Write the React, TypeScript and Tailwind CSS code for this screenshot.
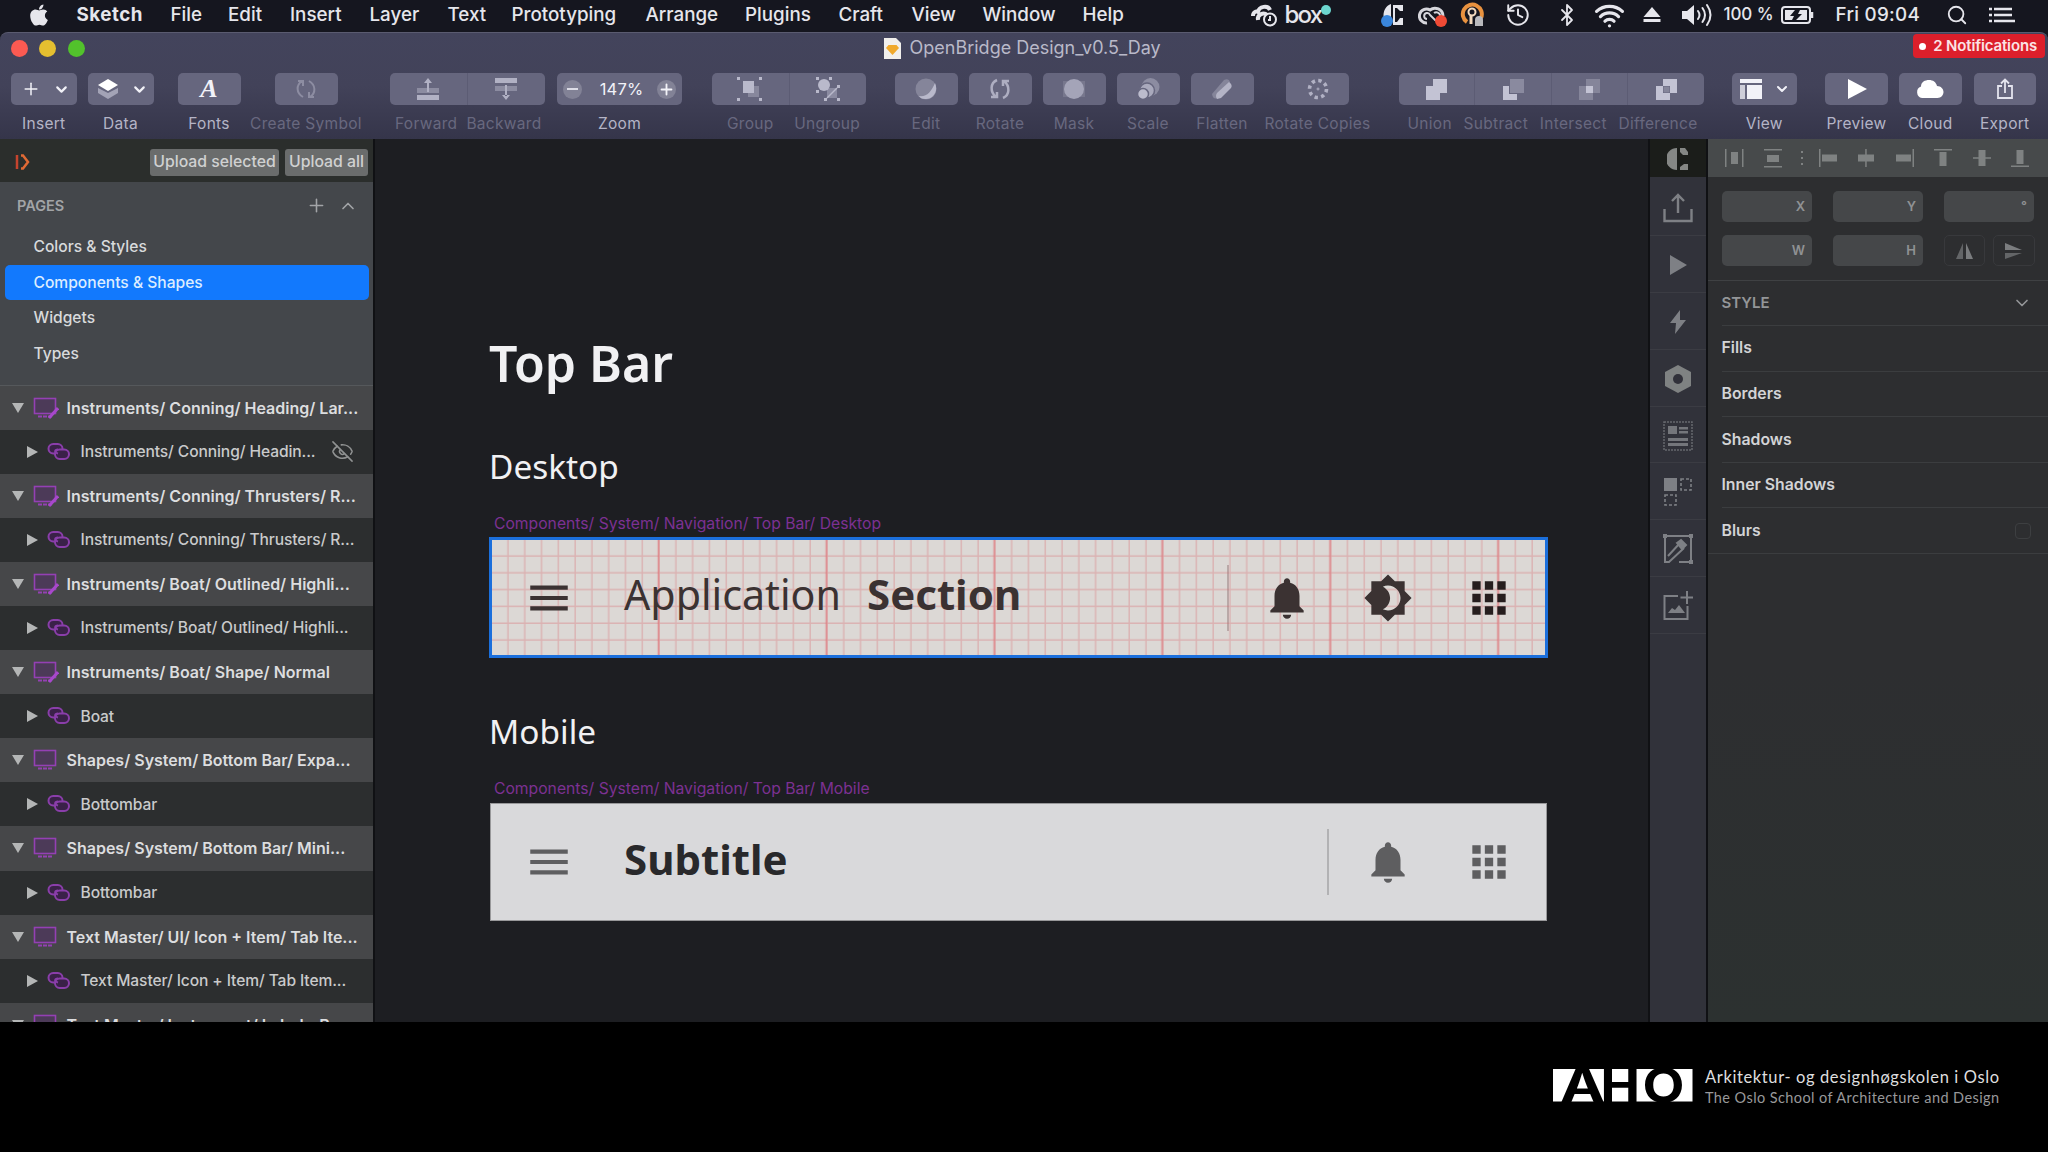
import React from 'react';
import { FaApple } from 'react-icons/fa';
import { MdMenu, MdNotifications, MdBrightness4, MdApps } from 'react-icons/md';
import { Bluetooth, ChevronDown, ChevronUp, EyeOff, History, Plus, Search, Wifi } from 'lucide-react';

const MENUS = [
  { label: 'File', width: 'w-[57.5px]' },
  { label: 'Edit', width: 'w-[62px]' },
  { label: 'Insert', width: 'w-[79.5px]' },
  { label: 'Layer', width: 'w-[78px]' },
  { label: 'Text', width: 'w-[64px]' },
  { label: 'Prototyping', width: 'w-[134px]' },
  { label: 'Arrange', width: 'w-[99.5px]' },
  { label: 'Plugins', width: 'w-[93.5px]' },
  { label: 'Craft', width: 'w-[73px]' },
  { label: 'View', width: 'w-[71px]' },
  { label: 'Window', width: 'w-[100px]' },
  { label: 'Help', width: 'w-[161px]' },
];

const PAGES = ['Colors & Styles', 'Components & Shapes', 'Widgets', 'Types'];

const LAYERS = [
  { name: 'Instruments/ Conning/ Heading/ Lar...', child: 'Instruments/ Conning/ Headin...', pen: true, hidden: true },
  { name: 'Instruments/ Conning/ Thrusters/ R...', child: 'Instruments/ Conning/ Thrusters/ R...', pen: true },
  { name: 'Instruments/ Boat/ Outlined/ Highli...', child: 'Instruments/ Boat/ Outlined/ Highli...', pen: true },
  { name: 'Instruments/ Boat/ Shape/ Normal', child: 'Boat', pen: true },
  { name: 'Shapes/ System/ Bottom Bar/ Expa...', child: 'Bottombar' },
  { name: 'Shapes/ System/ Bottom Bar/ Mini...', child: 'Bottombar' },
  { name: 'Text Master/ UI/ Icon + Item/ Tab Ite...', child: 'Text Master/ Icon + Item/ Tab Item...' },
  { name: 'Text Master/ Instrument/ Label - R...' },
];

const MenuBar = () => (
  <header className="flex h-8 items-center overflow-hidden whitespace-nowrap bg-[#15161f] pb-0.5 text-[18.8px] font-medium text-[#e6e6ec]">
    <div className="w-[76.500px] pl-[27px]"><FaApple size={24} /></div>
    <div className="w-[94px] font-bold tracking-[0.500px]">Sketch</div>
    {MENUS.map((m) => (
      <div key={m.label} className={m.width}>{m.label}</div>
    ))}
    <div className="flex w-[41px] justify-center">
      <svg width="27" height="24" viewBox="0 0 27 24" fill="none" stroke="#e6e6ec" strokeWidth="3">
        <path d="M2 13c0-4 3-5 5-4 1-6 10-7 12-2" strokeWidth="4" />
        <path d="M7 17c-1-6 6-8 9-5" strokeWidth="4" />
        <circle cx="19" cy="16.500" r="6" fill="#15161f" strokeWidth="2" />
        <path d="M19 13v4h-2" strokeWidth="2" />
      </svg>
    </div>
    <div className="flex w-[86px] items-start text-[24px] tracking-[-1.800px]">
      <span className="leading-7">box</span>
      <span className="mt-1 size-2.5 rounded-full bg-[#6cd6cf]" />
    </div>
    <div className="flex w-[42px] justify-center">
      <svg width="24" height="24" viewBox="0 0 24 24">
        <path d="M11 1v22C1 21 1 4 11 1z" fill="#e6e6ec" />
        <path d="M13 2h10v6h-3l-3-3h-2v14h2l3-4h3v7H13z" fill="#e6e6ec" />
        <circle cx="7" cy="18" r="6" fill="#3a86dc" />
      </svg>
    </div>
    <div className="flex w-10 justify-center">
      <svg width="30" height="24" viewBox="0 0 30 24" fill="none">
        <path d="M9 20a7 7 0 1 1 3-13 8 8 0 0 1 13 6" stroke="#d6d6dc" strokeWidth="3" />
        <path d="M9 16a3 3 0 1 1 3-4l5 5a4 4 0 1 0-1-7" stroke="#d6d6dc" strokeWidth="2" />
        <circle cx="23" cy="18" r="6" fill="#ef4a35" />
      </svg>
    </div>
    <div className="flex w-10 justify-center">
      <svg width="26" height="26" viewBox="0 0 26 26" fill="none">
        <path d="M7 20A9.500 9.500 0 1 1 21 16" stroke="#e9923f" strokeWidth="4" />
        <circle cx="12" cy="10" r="3.500" stroke="#f3d9bd" strokeWidth="2" />
        <path d="M11 13v9" stroke="#f3d9bd" strokeWidth="3" />
        <path d="M15 24v-6a4 4 0 0 1 8 0v6z" fill="#b9b9bd" />
      </svg>
    </div>
    <div className="flex w-[50px] justify-center"><History size={26} strokeWidth={1.8} /></div>
    <div className="flex w-12 justify-center"><Bluetooth size={24} strokeWidth={1.8} /></div>
    <div className="flex w-[38px] justify-center"><Wifi size={31} strokeWidth={2.5} /></div>
    <div className="flex w-[47px] justify-center">
      <svg width="18" height="16" viewBox="0 0 18 16" fill="#e6e6ec"><path d="M9 0l8.500 10H.5z" /><path d="M.5 12h17v3H.5z" /></svg>
    </div>
    <div className="flex w-12 pl-[5px]">
      <svg width="31" height="24" viewBox="0 0 31 24" fill="none" stroke="#e6e6ec" strokeWidth="2" strokeLinecap="round">
        <path d="M1 8h5l7-6v20l-7-6H1z" fill="#e6e6ec" stroke="none" />
        <path d="M17 8q3 4 0 8M21.500 5q5 7 0 14M26 2q7 10 0 20" />
      </svg>
    </div>
    <div className="w-[57px] text-[17px] tracking-[-0.1px]">100 %</div>
    <div className="w-[55px]">
      <svg width="33" height="18" viewBox="0 0 33 18" fill="none">
        <rect x="1" y="1" width="28" height="16" rx="3" stroke="#e6e6ec" strokeWidth="2" />
        <path d="M4 4h10l-5 6h4l-2 4H4zM26 14H15l6-6h-4l2-4h7z" fill="#e6e6ec" />
        <path d="M31 6v6" stroke="#e6e6ec" strokeWidth="2.500" />
      </svg>
    </div>
    <div className="w-[110px] tracking-[0.300px]">Fri 09:04</div>
    <div className="w-[43px]"><Search size={22} strokeWidth={2} /></div>
    <svg width="27" height="16" viewBox="0 0 27 16" stroke="#e6e6ec" strokeWidth="2.600">
      <path d="M0 2h3M5 2h18M0 8h3M5 8h18M0 14h3M5 14h21" />
    </svg>
  </header>
);

const TitleBar = () => (
  <div className="relative flex h-[37px] items-start">
    <div className="flex gap-[11.500px] pl-[10.500px] pt-[6.500px]">
      <span className="size-[17px] rounded-full bg-[#fb5a52]" />
      <span className="size-[17px] rounded-full bg-[#e5bf30]" />
      <span className="size-[17px] rounded-full bg-[#52c22c]" />
    </div>
    <div className="ml-[799px] flex items-center gap-[9px] pt-[2px]">
      <svg width="17" height="21" viewBox="0 0 17 21">
        <path d="M0 0h12l5 5v16H0z" fill="#f1efec" />
        <path d="M4.500 7h8l2.500 3-6.500 7L2 10z" fill="#f0a92c" />
      </svg>
      <span className="whitespace-nowrap text-[18px] leading-[26px] text-[#b9b9c9]">OpenBridge Design_v0.5_Day</span>
    </div>
    <div className="absolute right-[3px] top-[1px] flex h-6 items-center gap-[7px] rounded bg-[#dc1f2b] pl-[6px] pr-2 text-[15px] font-semibold text-[#fbe3e5]">
      <span className="size-[7px] rounded-full bg-white" />
      <span className="whitespace-nowrap tracking-[-0.150px]">2 Notifications</span>
    </div>
  </div>
);

type ToolProps = {
  label: string;
  box: string;
  dim?: boolean;
  children: React.ReactNode;
};

const Tool = ({ label, box, dim, children }: ToolProps) => (
  <div className={`flex shrink-0 flex-col items-center ${box}`}>
    <div className="flex h-8 w-full items-center justify-center rounded-[5px] bg-[#66667e] text-[#f2f2f8]">{children}</div>
    <span className={`mt-[6.500px] flex justify-center whitespace-nowrap text-[15.500px] leading-6 tracking-[0.3px] ${dim ? 'text-[#68687f]' : 'text-[#b4b4c6]'}`}>
      {label}
    </span>
  </div>
);

type GroupProps = {
  labels: string[];
  box: string;
  labelBox: string;
  children: React.ReactNode;
};

const ToolGroup = ({ labels, box, labelBox, children }: GroupProps) => (
  <div className={`flex shrink-0 flex-col ${box}`}>
    <div className="flex h-8 items-center divide-x divide-[#5c5c74] rounded-[5px] bg-[#66667e]">
      {React.Children.map(children, (c) => (
        <div className="flex h-8 flex-1 items-center justify-center">{c}</div>
      ))}
    </div>
    <div className={`mt-[6.500px] flex justify-between whitespace-nowrap text-[15.500px] leading-6 tracking-[0.3px] text-[#68687f] ${labelBox}`}>
      {labels.map((l) => <span key={l}>{l}</span>)}
    </div>
  </div>
);

const Toolbar = () => (
  <div className="flex h-[69px] items-start pt-[3px]">
    <Tool label="Insert" box="ml-[11px] w-[65.500px]">
      <Plus size={20} strokeWidth={1.8} className="ml-1" />
      <ChevronDown size={17} strokeWidth={3} className="ml-3" />
    </Tool>
    <Tool label="Data" box="ml-[11px] w-[66px]">
      <svg width="22" height="20" viewBox="0 0 22 20" className="ml-1">
        <path d="M1 9l10 5 10-5v5l-10 6-10-6z" fill="#a3a3b6" />
        <path d="M11 0l10 6-10 6L1 6z" fill="#fff" />
      </svg>
      <ChevronDown size={17} strokeWidth={3} className="ml-3" />
    </Tool>
    <Tool label="Fonts" box="ml-6 w-[63px]">
      <span className="font-['Liberation_Serif',serif] text-[26px] font-bold italic leading-8">A</span>
    </Tool>
    <Tool label="Create Symbol" box="ml-[34px] w-[63px]" dim>
      <svg width="22" height="22" viewBox="0 0 22 22" fill="none" stroke="#8d8da2" strokeWidth="2">
        <path d="M8 19C1 15 1 7 7 3M3 3h5v5M14 3c7 4 7 12 1 16M19 19h-5v-5" />
      </svg>
    </Tool>
    <ToolGroup labels={['Forward', 'Backward']} box="ml-[52.500px] w-[154.500px]" labelBox="pl-[5px] pr-[3px]">
      <svg width="24" height="22" viewBox="0 0 24 22" fill="#b1b1c4">
        <path d="M1 17h22v5H1z" /><path d="M1 10h22v5H1z" opacity=".5" /><path d="M11 4h2v10h-2zM12 0l4 5H8z" />
      </svg>
      <svg width="24" height="22" viewBox="0 0 24 22" fill="#b1b1c4">
        <path d="M1 0h22v5H1z" /><path d="M1 8h22v5H1z" opacity=".5" /><path d="M11 7h2v11h-2zM12 22l4-5H8z" />
      </svg>
    </ToolGroup>
    <Tool label="Zoom" box="ml-[12.500px] w-[125px]">
      <div className="flex w-full items-center justify-between px-[6px] text-[16.500px]">
        <span className="flex size-[19px] items-center justify-center rounded-full bg-[#828296]"><span className="h-[2px] w-[11px] bg-[#dcdce6]" /></span>
        <span className="pl-1 tracking-[0.2px]">147%</span>
        <span className="flex size-[19px] items-center justify-center rounded-full bg-[#828296]"><Plus size={17} strokeWidth={2.600} /></span>
      </div>
    </Tool>
    <ToolGroup labels={['Group', 'Ungroup']} box="ml-[30px] w-[154px]" labelBox="pl-[15px] pr-[6px]">
      <svg width="26" height="24" viewBox="0 0 26 24" fill="#b9b9cb">
        <path d="M6 4h11v12H6z" /><path d="M11 9h11v11H11z" opacity=".4" />
        <path d="M0 0h3v3H0zM22 0h3v3h-3zM0 21h3v3H0zM22 21h3v3h-3z" />
      </svg>
      <svg width="26" height="24" viewBox="0 0 26 24" fill="#b9b9cb">
        <circle cx="9" cy="8" r="6" />
        <path d="M1 0h3v3H1zM14 0h3v3h-3zM1 13h3v3H1zM22 8h3v3h-3zM22 21h3v3h-3zM9 21h3v3H9z" />
        <path d="M12 11h10v10H12z" opacity=".45" /><path d="M12 21l10-10" stroke="#b9b9cb" strokeWidth="1.500" />
      </svg>
    </ToolGroup>
    <Tool label="Edit" box="ml-[28.500px] w-[63px]" dim>
      <svg width="22" height="22" viewBox="0 0 22 22">
        <circle cx="11" cy="11" r="10.500" fill="#85859a" />
        <path d="M20 5c4 9-3 17-10 16-3 0-5-1-6-3 8 1 12-4 16-13z" fill="#b9b9cb" />
      </svg>
    </Tool>
    <Tool label="Rotate" box="ml-[11px] w-[63px]" dim>
      <svg width="22" height="22" viewBox="0 0 22 22" fill="none" stroke="#aeaec1" strokeWidth="2.500">
        <path d="M8 2C1 5 1 14 7 19M2 19h6v-5M14 20c7-3 7-12 1-17M20 3h-6v5" />
      </svg>
    </Tool>
    <Tool label="Mask" box="ml-[11px] w-[63px]" dim>
      <svg width="24" height="22" viewBox="0 0 24 22">
        <rect x="1" y="3" width="22" height="16" fill="#77778d" /><circle cx="12" cy="11" r="10" fill="#a4a4b8" />
      </svg>
    </Tool>
    <Tool label="Scale" box="ml-[11px] w-[63px]" dim>
      <svg width="24" height="22" viewBox="0 0 24 22">
        <circle cx="14.500" cy="9" r="9" fill="#8c8ca1" />
        <circle cx="11" cy="12.500" r="7.500" fill="#a9a9bc" stroke="#66667e" strokeWidth="1.500" />
        <circle cx="7" cy="16" r="5.500" fill="#bcbccd" stroke="#66667e" strokeWidth="1.500" />
      </svg>
    </Tool>
    <Tool label="Flatten" box="ml-[11px] w-[63px]" dim>
      <svg width="22" height="22" viewBox="0 0 22 22">
        <path d="M1 16L13 2q5-2 6 2L7 20q-5 2-6-4z" fill="#85859a" /><path d="M6 21q-2-3 0-6L18 4q4 3 2 6L10 20z" fill="#b4b4c6" />
      </svg>
    </Tool>
    <Tool label="Rotate Copies" box="ml-[32.500px] w-[63px]" dim>
      <svg width="22" height="22" viewBox="0 0 22 22" fill="none" stroke="#b1b1c4">
        <circle cx="11" cy="11" r="8.500" strokeWidth="3.600" strokeDasharray="3.400 3.276" /><circle cx="11" cy="11" r="1" strokeWidth="1" />
      </svg>
    </Tool>
    <ToolGroup labels={['Union', 'Subtract', 'Intersect', 'Difference']} box="ml-[49.500px] w-[305px]" labelBox="pl-[9px] pr-[6px]">
      <svg width="24" height="22" viewBox="0 0 24 22"><path d="M9 1h14v14h-7v7H2V8h7z" fill="#c3c3d4" /></svg>
      <svg width="24" height="22" viewBox="0 0 24 22"><path d="M9 1h14v14H9z" fill="#8a8a9f" /><path d="M2 8h6v8h8v6H2z" fill="#c3c3d4" /></svg>
      <svg width="24" height="22" viewBox="0 0 24 22"><path d="M9 1h14v14h-7v7H2V8h7z" fill="#85859a" /><path d="M9 8h7v7H9z" fill="#c3c3d4" /></svg>
      <svg width="24" height="22" viewBox="0 0 24 22"><path d="M9 1h14v14h-7V8H9zM2 8h7v7h7v7H2z" fill="#c3c3d4" /><path d="M9.500 8.500h6v6h-6z" fill="#85859a" /></svg>
    </ToolGroup>
    <Tool label="View" box="ml-7 w-[65.500px]">
      <svg width="22" height="20" viewBox="0 0 22 20" fill="#f2f2f8" className="ml-0.5">
        <path d="M0 0h22v4H0z" /><path d="M0 6h5v14H0z" opacity=".75" /><path d="M7 6h15v14H7z" />
      </svg>
      <ChevronDown size={16} strokeWidth={3} className="ml-3" />
    </Tool>
    <Tool label="Preview" box="ml-7 w-[63px]">
      <svg width="20" height="20" viewBox="0 0 20 20" fill="#fff"><path d="M1 0l19 10L1 20z" /></svg>
    </Tool>
    <Tool label="Cloud" box="ml-[10.500px] w-[63.500px]">
      <svg width="28" height="18" viewBox="0 0 28 18" fill="#fff"><path d="M6 18a6 6 0 0 1-1-11.500C5 2 9 0 13 0s7 2 8 6c4 0 6.500 3 6.500 6s-2.500 6-6 6z" /></svg>
    </Tool>
    <Tool label="Export" box="ml-[11.500px] w-[62.500px]">
      <svg width="18" height="22" viewBox="0 0 18 22" fill="none" stroke="#e4e4ee" strokeWidth="1.800">
        <path d="M6 8H2v12h14V8h-4M9 15V2M5 5.500L9 1.500l4 4" />
      </svg>
    </Tool>
  </div>
);

const ArtboardIcon = ({ pen }: { pen?: boolean }) => (
  <svg width="26" height="24" viewBox="0 0 26 24" fill="none" stroke="#9440b4" strokeWidth="1.600">
    <rect x="1.500" y="2.500" width="21" height="15" fill="#4c3a58" />
    <path d="M5 20.500h14" strokeWidth="2" strokeDasharray="4 1" />
    {pen && <path d="M25 12l-9 10" stroke="#a848cc" strokeWidth="3" />}
  </svg>
);

const LinkIcon = () => (
  <svg width="24" height="20" viewBox="0 0 24 20" fill="none" stroke="#8a3eaa" strokeWidth="2">
    <rect x="1.500" y="2" width="14" height="9.500" rx="4.700" fill="#3a2148" />
    <rect x="8" y="7.500" width="14" height="9.500" rx="4.700" fill="#3a2148" />
    <path d="M11 11.500c-4-1-3.500-4 0-4" />
  </svg>
);

const Sidebar = () => (
  <aside className="flex w-[373px] shrink-0 flex-col overflow-hidden bg-[#44474b]">
    <div className="flex h-[43px] shrink-0 items-center gap-[6px] bg-[#2b2e2c] pr-[5px] pt-[3px]">
      <svg width="15" height="16" viewBox="0 0 15 16" fill="none" className="ml-[15px] mr-auto">
        <path d="M2 1v14" stroke="#c5442e" strokeWidth="2.500" />
        <path d="M6 1.500h2l5 6.500-5 6.500H6" stroke="#e06a35" strokeWidth="2.500" />
      </svg>
      <button className="h-[27px] w-[129px] whitespace-nowrap rounded-[3px] bg-[#6a6c6c] text-[15.800px] font-medium text-[#d0d1d1]">Upload selected</button>
      <button className="h-[27px] w-[83px] whitespace-nowrap rounded-[3px] bg-[#6a6c6c] text-[15.800px] font-medium text-[#d0d1d1]">Upload all</button>
    </div>
    <div className="flex h-[47px] shrink-0 items-center pl-[17px] text-[#a2a4a7]">
      <span className="flex-1 text-[14.500px] font-semibold">PAGES</span>
      <Plus size={21} strokeWidth={1.800} />
      <ChevronUp size={20} strokeWidth={2} className="ml-[11px] mr-[15px]" />
    </div>
    <div className="h-[156.500px] shrink-0 border-b border-[#55585b] px-[4.500px] text-[15.600px] font-medium text-[#d8dadc]">
      {PAGES.map((page) => (
        <div
          key={page}
          className={`flex h-[35.600px] items-center rounded-[5px] pl-[29px] ${page === 'Components & Shapes' ? 'bg-[#1279fd] text-[#dcecff]' : ''}`}
        >
          {page}
        </div>
      ))}
    </div>
    {LAYERS.map((layer) => (
      <div key={layer.name} className="shrink-0 whitespace-nowrap">
        <div className="flex h-[44.100px] items-center bg-[#464749] pl-3 text-[16px] font-semibold text-[#dcdddf]">
          <svg width="12" height="10" viewBox="0 0 12 10" fill="#b4b6b6"><path d="M0 0h12L6 10z" /></svg>
          <span className="ml-[8.500px] mr-2"><ArtboardIcon pen={layer.pen} /></span>
          {layer.name}
        </div>
        {layer.child && (
          <div className="flex h-[44.100px] items-center bg-[#2c2e2f] pl-[27px] text-[15.600px] font-medium tracking-[-0.100px] text-[#c9cacb]">
            <svg width="11" height="12" viewBox="0 0 11 12" fill="#b4b6b6"><path d="M0 0l11 6-11 6z" /></svg>
            <span className="ml-[9px] mr-[9.500px]"><LinkIcon /></span>
            {layer.child}
            {layer.hidden && <EyeOff size={23} strokeWidth={1.600} className="ml-auto mr-[19px] text-[#909292]" />}
          </div>
        )}
      </div>
    ))}
  </aside>
);

// 10px grid of the artboard at 147% zoom, with a thicker line every ten columns
const GridOverlay = () => (
  <svg className="absolute inset-0 size-full">
    <defs>
      <pattern id="cell" width="16.790" height="16.790" patternUnits="userSpaceOnUse">
        <path d="M16 0v16.790M0 16h16.790" stroke="#d86a70" strokeOpacity=".35" strokeWidth="1.400" />
      </pattern>
      <pattern id="column" width="167.900" height="200" patternUnits="userSpaceOnUse">
        <path d="M166.500 0v200" stroke="#e06068" strokeOpacity=".55" strokeWidth="1.800" />
      </pattern>
    </defs>
    <rect width="100%" height="100%" fill="url(#cell)" />
    <rect width="100%" height="100%" fill="url(#column)" />
  </svg>
);

const Canvas = () => (
  <main className="w-[1273px] shrink-0 bg-[#1d1e22] pl-[114px] font-['Noto_Sans',sans-serif] text-[#f1f1f3]">
    <h1 className="pt-[186px] text-[50px] font-semibold leading-[76px]">Top Bar</h1>
    <h2 className="mt-[37px] text-[33.400px] leading-[56px]">Desktop</h2>
    <p className="mt-[18px] pl-[5px] font-['Inter',sans-serif] text-[15.700px] leading-6 text-[#7c3192]">Components/ System/ Navigation/ Top Bar/ Desktop</p>
    <div className="relative mt-px flex h-[121px] w-[1059px] items-center border-[3px] border-[#1b6fdc] bg-[#dcd8d5] text-[#3b3232]">
      <GridOverlay />
      <MdMenu size={50} className="relative ml-[32px]" />
      <span className="relative ml-[50px] w-[243px] whitespace-nowrap pb-[7px] text-[41.200px] leading-[56px]">Application</span>
      <span className="relative w-[360px] whitespace-nowrap pb-[7px] text-[42px] font-bold leading-[56px]">Section</span>
      <span className="h-[66px] w-[2px] bg-[#b9a9a8]" />
      <MdNotifications size={50} className="relative ml-[33px]" />
      <MdBrightness4 size={50} className="relative ml-[51px]" />
      <MdApps size={50} className="relative ml-[51px] text-[#261e1e]" />
    </div>
    <h2 className="mt-[45px] text-[33.400px] leading-[56px]">Mobile</h2>
    <p className="mt-[18px] pl-[5px] font-['Inter',sans-serif] text-[15.700px] leading-6 text-[#7c3192]">Components/ System/ Navigation/ Top Bar/ Mobile</p>
    <div className="ml-px mt-[2px] flex h-[118px] w-[1057px] items-center border border-[#98989a] bg-[#d9d9db] text-[#5e5e60]">
      <MdMenu size={50} className="ml-[33px]" />
      <span className="ml-[50px] w-[703px] pb-[6px] text-[42px] font-bold leading-[56px] text-[#29292b]">Subtitle</span>
      <span className="h-[66px] w-[2px] bg-[#b2b2b4]" />
      <MdNotifications size={50} className="ml-[34px]" />
      <MdApps size={50} className="ml-[51px]" />
    </div>
  </main>
);

const STRIP_ICONS = [
  <svg width="30" height="30" viewBox="0 0 30 30" fill="none" stroke="#7e8085" strokeWidth="2.400"><path d="M1.500 16v12h27V16M15 20V2M9 8l6-6 6 6" /></svg>,
  <svg width="17" height="20" viewBox="0 0 17 20" fill="#7e8085"><path d="M0 0l17 10L0 20z" /></svg>,
  <svg width="18" height="24" viewBox="0 0 18 24" fill="#7e8085"><path d="M11 0L1 13h6L6 24l11-14h-6z" /></svg>,
  <svg width="28" height="30" viewBox="0 0 28 30"><path d="M14 1l13 7v14l-13 7-13-7V8z" fill="#7f8282" /><circle cx="14" cy="15" r="5" fill="#31313a" /></svg>,
  <svg width="30" height="30" viewBox="0 0 30 30" fill="#74767b"><rect x="1" y="1" width="28" height="28" fill="none" stroke="#66686e" strokeWidth="1.500" strokeDasharray="2 1" /><path d="M5 5h9v8H5zM16 6h9v2.500h-9zM16 10h9v2.500h-9zM5 17h20v3H5zM5 22h20v3H5z" /></svg>,
  <svg width="30" height="30" viewBox="0 0 30 30" fill="none" stroke="#7e8085" strokeWidth="1.600" strokeDasharray="3 2"><path d="M1 1h13v13H1z" fill="#7e8085" stroke="none" /><path d="M18 2h10v11H18zM2 18h11v10H2z" /></svg>,
  <svg width="30" height="30" viewBox="0 0 30 30" fill="none" stroke="#7e8085" strokeWidth="2"><path d="M2 10V2h26v26H16M2 10v18h4l15-14M5 22L17 9" /><path d="M14 9l4-3 5 5-4 4z" fill="#7e8085" /><path d="M0 0h4v4H0zM26 0h4v4h-4zM26 26h4v4h-4z" fill="#7e8085" stroke="none" /></svg>,
  <svg width="30" height="30" viewBox="0 0 30 30" fill="none" stroke="#7e8085" strokeWidth="2"><path d="M15 5H1.500v23h23V15M24 0v13M17.500 6.500H30" /><path d="M5 22l4-5 3 2 4-5 6 8z" fill="#7e8085" stroke="none" /></svg>,
];

const PluginStrip = () => (
  <div className="flex w-[56px] shrink-0 flex-col bg-[#31323a]">
    <div className="mb-[2px] flex h-[38px] items-center justify-center bg-[#1b1d1a] pt-[2px]">
      <svg width="22" height="22" viewBox="0 0 22 22" fill="#858785">
        <path d="M10 0v22A11 11 0 0 1 10 0z" /><path d="M13 0h5l3 4v3h-5l-3-3zM13 22h8v-6h-4l-4 3z" />
      </svg>
    </div>
    {STRIP_ICONS.map((icon, i) => (
      <div key={i} className="flex h-[56.900px] items-center justify-center border-b border-[#3b3c43] pt-[2px]">{icon}</div>
    ))}
  </div>
);

const ALIGN_ICONS = [
  'M1 1h1.500v18H1zM18 1h1.500v18H18zM7 4h7v12H7z',
  'M1 1h18v1.500H1zM1 18h18v1.500H1zM4 7h12v7H4z',
  'M9 3h2v2H9zM9 9h2v2H9zM9 15h2v2H9z',
  'M1 1h1.500v18H1zM4 6.500h15v7H4z',
  'M2 6.500h16v7H2zM9.200 1h1.500v18H9.200z',
  'M17.500 1H19v18h-1.500zM1 6.500h15v7H1z',
  'M1 1h18v1.500H1zM6.500 4h7v14h-7z',
  'M6.500 2h7v16h-7zM1 9.200h18v1.500H1z',
  'M1 17.500h18V19H1zM6.500 2h7v14h-7z',
];

const Field = ({ label }: { label: string }) => (
  <div className="flex h-[31px] w-[90.500px] items-center justify-end rounded-[5px] bg-[#454749] pr-[7px] text-[13px] font-semibold text-[#909294]">{label}</div>
);

const STYLES = ['Fills', 'Borders', 'Shadows', 'Inner Shadows', 'Blurs'];

const Inspector = () => (
  <aside className="flex-1 bg-gradient-to-b from-[#2d2e30] from-60% to-[#2c3130]">
    <div className="flex h-[38px] items-center bg-[#474a4b] pl-4">
      {ALIGN_ICONS.map((d, i) => (
        <div key={i} className={i === 2 ? 'w-[18px]' : i === 1 ? 'w-[37px]' : 'w-[38.500px]'}>
          <svg width="20" height="20" viewBox="0 0 20 20" fill="#7f8282" className={i === 2 ? '-ml-2' : ''}><path d={d} /></svg>
        </div>
      ))}
    </div>
    <div className="grid grid-cols-[111px_111px_91px] gap-y-[13px] border-b border-[#3f4143] pb-[14px] pl-[13.500px] pt-[14px]">
      <Field label="X" />
      <Field label="Y" />
      <Field label="°" />
      <Field label="W" />
      <Field label="H" />
      <div className="flex justify-between">
        <span className="flex h-[31px] w-[41.500px] items-center justify-center rounded-[5px] border border-[#38393c]">
          <svg width="17" height="16" viewBox="0 0 17 16" fill="#7b7d7f"><path d="M7 0v16H0z" opacity=".7" /><path d="M10 0v16h7z" /></svg>
        </span>
        <span className="flex h-[31px] w-[41.500px] items-center justify-center rounded-[5px] border border-[#38393c]">
          <svg width="17" height="16" viewBox="0 0 17 16" fill="#7b7d7f"><path d="M0 7h17L0 0z" /><path d="M0 10h17L0 16z" opacity=".7" /></svg>
        </span>
      </div>
    </div>
    <div className="flex h-[44px] items-center pl-[13.500px] pr-[17px] text-[#949698]">
      <span className="flex-1 text-[15px] font-semibold">STYLE</span>
      <ChevronDown size={20} strokeWidth={2} />
    </div>
    <div className="border-b border-[#3b3d3f] text-[15.800px] font-semibold text-[#d3d4d6]">
      {STYLES.map((s) => (
        <div key={s} className="ml-[13.500px] flex h-[45.600px] items-center justify-between border-t border-[#3b3d3f] pr-[18px]">
          {s}
          {s === 'Blurs' && <span className="size-4 rounded border border-[#3d3f41]" />}
        </div>
      ))}
    </div>
  </aside>
);

const Footer = () => (
  <footer className="flex h-[130px] items-start bg-black pl-[1553px] pt-[46px]">
    <svg width="140" height="34" viewBox="0 0 140 34" className="shrink-0 overflow-visible">
      <rect y="1" width="139.500" height="32.500" fill="#fff" />
      <rect x="51" width="8" height="34" />
      <rect x="76" width="7.500" height="34" />
      <g className="font-['Inter',sans-serif] font-bold">
        <text x="7" y="34" fontSize="48" textLength="45" lengthAdjust="spacingAndGlyphs">A</text>
        <text x="47.500" y="34" fontSize="47" textLength="39" lengthAdjust="spacingAndGlyphs">H</text>
        <text x="89.500" y="34.500" fontSize="49" textLength="42" lengthAdjust="spacingAndGlyphs">O</text>
      </g>
    </svg>
    <div className="-mt-[1.500px] ml-3 whitespace-nowrap font-['Lato',sans-serif]">
      <p className="text-[16.500px] leading-[21px] tracking-[0.620px] text-[#dededf]">Arkitektur- og designhøgskolen i Oslo</p>
      <p className="text-[14.500px] leading-[20px] tracking-[0.410px] text-[#98989a]">The Oslo School of Architecture and Design</p>
    </div>
  </footer>
);

export default function App() {
  return (
    <div className="h-[1152px] w-[2048px] overflow-hidden bg-black font-['Inter',sans-serif]">
      <div className="bg-[#15161f]">
        <MenuBar />
        <div className="h-[107px] rounded-t-lg border-t border-[#5a5b70] bg-gradient-to-b from-[#43445c] via-[#424259] to-[#35354a]">
          <TitleBar />
          <Toolbar />
        </div>
      </div>
      <div className="flex h-[883px] gap-[2px] overflow-hidden bg-[#101114]">
        <Sidebar />
        <Canvas />
        <PluginStrip />
        <Inspector />
      </div>
      <Footer />
    </div>
  );
}
